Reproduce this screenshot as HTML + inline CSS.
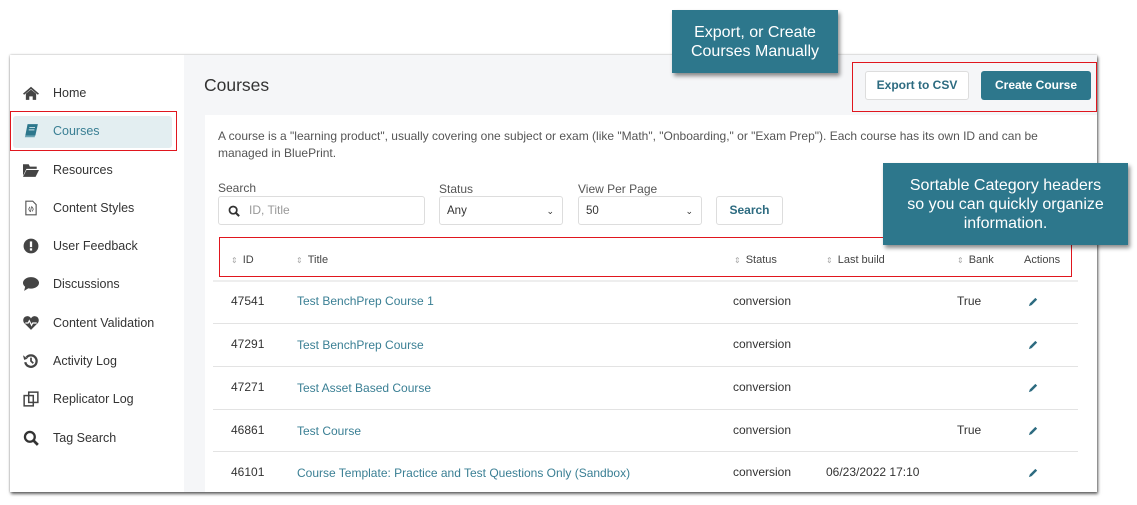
<!DOCTYPE html>
<html><head><meta charset="utf-8"><style>
*{margin:0;padding:0;box-sizing:border-box}
body{width:1137px;height:505px;background:#fff;font-family:"Liberation Sans",sans-serif;position:relative;overflow:hidden;color:#333}
.a{position:absolute}
.frame{left:10px;top:55px;width:1087px;height:437px;background:#f5f6f8;box-shadow:1px 2px 3px rgba(0,0,0,.6),0 0 2px rgba(0,0,0,.3);overflow:hidden}
.side{left:0;top:0;width:174px;height:437px;background:#fff}
.nav{position:absolute;left:43px;font-size:12.5px;color:#333}
.ic{position:absolute;left:13px;width:16px;height:16px}
.card{left:195px;top:60px;width:892px;height:377px;background:#fff}
.lbl{font-size:12px;color:#555}
.box{border:1px solid #ddd;border-radius:3px;background:#fff;font-size:11.5px}
.th{font-size:11px;color:#444;top:199px}
.th b{font-weight:normal;color:#aaa;font-size:8px;margin-right:5px}
.row{font-size:12px;color:#333}
.lk{color:#3a7f94}
.line{left:203px;width:865px;height:1px;background:#e3e3e3}
.call{background:#2d778c;color:#fff;text-align:center;font-size:16px;line-height:19px;box-shadow:2px 3px 4px rgba(0,0,0,.45)}
.red{border:1.5px solid #e0161e}
</style></head><body>
<div class="a frame">
 <div class="a side"></div>
 <div class="a" style="left:3px;top:61px;width:159px;height:32px;background:#e3eef1;border-radius:3px"></div>
 <div class="a red" style="left:0;top:56px;width:167px;height:40px"></div>
 <div class="nav" style="top:31px">Home</div>
 <div class="nav" style="top:69px;color:#3a7f94">Courses</div>
 <div class="nav" style="top:108px">Resources</div>
 <div class="nav" style="top:146px">Content Styles</div>
 <div class="nav" style="top:184px">User Feedback</div>
 <div class="nav" style="top:222px">Discussions</div>
 <div class="nav" style="top:261px">Content Validation</div>
 <div class="nav" style="top:299px">Activity Log</div>
 <div class="nav" style="top:337px">Replicator Log</div>
 <div class="nav" style="top:376px">Tag Search</div>
 <svg class="ic" style="top:30px" viewBox="0 0 14 14"><path d="M0 7.5 7 1.5 14 7.5 13 8.5 7 3.5 1 8.5zM2.5 7.5 7 4l4.5 3.5V13H8.5V10h-3v3h-3z" fill="#444"/></svg>
 <svg class="ic" style="top:68px" viewBox="0 0 14 14"><path d="M4 1h9l-2.2 10H2z" fill="#2d778c"/><path d="M2 11h8.5l-.3 1.5H1.6z" fill="#6aa3b3"/><path d="M5.5 4h5M5 6h5" stroke="#cfe3e9" stroke-width=".8"/></svg>
 <svg class="ic" style="top:107px" viewBox="0 0 14 14"><path d="M0 2h5l1 2h6v2H3L0 12zM3 7h11l-3 6H0z" fill="#444"/></svg>
 <svg class="ic" style="top:145px" viewBox="0 0 14 14"><path d="M2.5 1h6l3 3v9h-9z" fill="none" stroke="#555"/><path d="M6 6 5 8l1 2M8 6l1 2-1 2M7.5 5.5 6.5 10.5" fill="none" stroke="#555" stroke-width=".7"/></svg>
 <svg class="ic" style="top:183px" viewBox="0 0 14 14"><circle cx="7" cy="7" r="6.5" fill="#444"/><rect x="6" y="3" width="2" height="5" fill="#fff"/><rect x="6" y="9" width="2" height="2" fill="#fff"/></svg>
 <svg class="ic" style="top:221px" viewBox="0 0 14 14"><ellipse cx="7" cy="6" rx="7" ry="5" fill="#444"/><path d="M2 9 1 13 6 10z" fill="#444"/></svg>
 <svg class="ic" style="top:260px" viewBox="0 0 14 14"><path d="M7 13 1 7C-1 4 1 1 4 1c1.5 0 2.5 1 3 2 .5-1 1.5-2 3-2 3 0 5 3 3 6z" fill="#444"/><path d="M2 7h2.5l1-2 2 4 1-2H12" fill="none" stroke="#fff" stroke-width="1"/></svg>
 <svg class="ic" style="top:298px" viewBox="0 0 14 14"><path d="M3 4a5 5 0 1 1-1 4" fill="none" stroke="#444" stroke-width="2"/><path d="M7 4v3l2 2" fill="none" stroke="#444" stroke-width="1.5"/><path d="M0 2 4 5 1 6z" fill="#444"/></svg>
 <svg class="ic" style="top:336px" viewBox="0 0 14 14"><rect x="1" y="4" width="8" height="9" fill="none" stroke="#444" stroke-width="1.3"/><rect x="5" y="1" width="8" height="9" fill="none" stroke="#444" stroke-width="1.3"/></svg>
 <svg class="ic" style="top:375px" viewBox="0 0 14 14"><circle cx="6" cy="6" r="4.3" fill="none" stroke="#333" stroke-width="2"/><path d="M9 9 13 13" stroke="#333" stroke-width="2.4"/></svg>

 <div class="a" style="left:194px;top:20px;font-size:17.5px;color:#333">Courses</div>
 <div class="a red" style="left:842px;top:7px;width:245px;height:50px"></div>
 <div class="a box" style="left:855px;top:16px;width:104px;height:29px;font-weight:bold;color:#2d6b80;text-align:center;line-height:27px;font-size:12px">Export to CSV</div>
 <div class="a" style="left:971px;top:16px;width:110px;height:29px;background:#2d778c;border-radius:3px;color:#fff;font-weight:bold;text-align:center;line-height:29px;font-size:12px">Create Course</div>

 <div class="a card"></div>
 <div class="a" style="left:208px;top:73px;font-size:12px;line-height:17px;color:#555;width:860px">A course is a "learning product", usually covering one subject or exam (like "Math", "Onboarding," or "Exam Prep"). Each course has its own ID and can be managed in BluePrint.</div>
 <div class="a lbl" style="left:208px;top:126px">Search</div>
 <div class="a lbl" style="left:429px;top:127px">Status</div>
 <div class="a lbl" style="left:568px;top:127px">View Per Page</div>
 <div class="a box" style="left:208px;top:141px;width:207px;height:29px;line-height:27px;padding-left:30px;color:#999;font-size:12px">ID, Title</div>
 <svg class="a" style="left:218px;top:150px" width="12" height="12" viewBox="0 0 14 14"><circle cx="6" cy="6" r="4.3" fill="none" stroke="#333" stroke-width="2"/><path d="M9 9 13 13" stroke="#333" stroke-width="2.4"/></svg>
 <div class="a box" style="left:429px;top:141px;width:124px;height:29px;line-height:29px;padding-left:7px">Any<span style="position:absolute;right:8px;font-size:9px">&#8964;</span></div>
 <div class="a box" style="left:568px;top:141px;width:124px;height:29px;line-height:29px;padding-left:7px">50<span style="position:absolute;right:8px;font-size:9px">&#8964;</span></div>
 <div class="a box" style="left:706px;top:141px;width:67px;height:29px;line-height:27px;text-align:center;font-weight:bold;color:#2d6b80;font-size:12px">Search</div>

 <div class="a red" style="left:209px;top:182px;width:853px;height:40px"></div>
 <div class="a th" style="left:221px"><b>&#8661;</b>ID</div>
 <div class="a th" style="left:286px"><b>&#8661;</b>Title</div>
 <div class="a th" style="left:724px"><b>&#8661;</b>Status</div>
 <div class="a th" style="left:816px"><b>&#8661;</b>Last build</div>
 <div class="a th" style="left:947px"><b>&#8661;</b>Bank</div>
 <div class="a th" style="left:1014px">Actions</div>
 <div class="a line" style="top:225px;height:2px;background:#eee"></div>
 <div class="a line" style="top:268px"></div>
 <div class="a line" style="top:311px"></div>
 <div class="a line" style="top:354px"></div>
 <div class="a line" style="top:396px"></div>

 <div class="a row" style="left:221px;top:239px">47541</div><div class="a row lk" style="left:287px;top:239px">Test BenchPrep Course 1</div><div class="a row" style="left:723px;top:239px">conversion</div><div class="a row" style="left:947px;top:239px">True</div>
 <div class="a row" style="left:221px;top:282px">47291</div><div class="a row lk" style="left:287px;top:283px">Test BenchPrep Course</div><div class="a row" style="left:723px;top:282px">conversion</div>
 <div class="a row" style="left:221px;top:325px">47271</div><div class="a row lk" style="left:287px;top:326px">Test Asset Based Course</div><div class="a row" style="left:723px;top:325px">conversion</div>
 <div class="a row" style="left:221px;top:368px">46861</div><div class="a row lk" style="left:287px;top:369px">Test Course</div><div class="a row" style="left:723px;top:368px">conversion</div><div class="a row" style="left:947px;top:368px">True</div>
 <div class="a row" style="left:221px;top:410px">46101</div><div class="a row lk" style="left:287px;top:411px">Course Template: Practice and Test Questions Only (Sandbox)</div><div class="a row" style="left:723px;top:410px">conversion</div><div class="a row" style="left:816px;top:410px">06/23/2022 17:10</div>
 <svg class="a" style="left:1018px;top:241px" width="11" height="11" viewBox="0 0 12 12"><path d="M1 11 2 8 8 2l2 2-6 6z" fill="#2d6b80"/></svg>
 <svg class="a" style="left:1018px;top:284px" width="11" height="11" viewBox="0 0 12 12"><path d="M1 11 2 8 8 2l2 2-6 6z" fill="#2d6b80"/></svg>
 <svg class="a" style="left:1018px;top:327px" width="11" height="11" viewBox="0 0 12 12"><path d="M1 11 2 8 8 2l2 2-6 6z" fill="#2d6b80"/></svg>
 <svg class="a" style="left:1018px;top:370px" width="11" height="11" viewBox="0 0 12 12"><path d="M1 11 2 8 8 2l2 2-6 6z" fill="#2d6b80"/></svg>
 <svg class="a" style="left:1018px;top:412px" width="11" height="11" viewBox="0 0 12 12"><path d="M1 11 2 8 8 2l2 2-6 6z" fill="#2d6b80"/></svg>
</div>
<div class="a call" style="left:672px;top:10px;width:166px;height:63px;padding-top:13px">Export, or Create<br>Courses Manually</div>
<div class="a call" style="left:883px;top:163px;width:245px;height:82px;padding-top:13px">Sortable Category headers<br>so you can quickly organize<br>information.</div>
</body></html>
